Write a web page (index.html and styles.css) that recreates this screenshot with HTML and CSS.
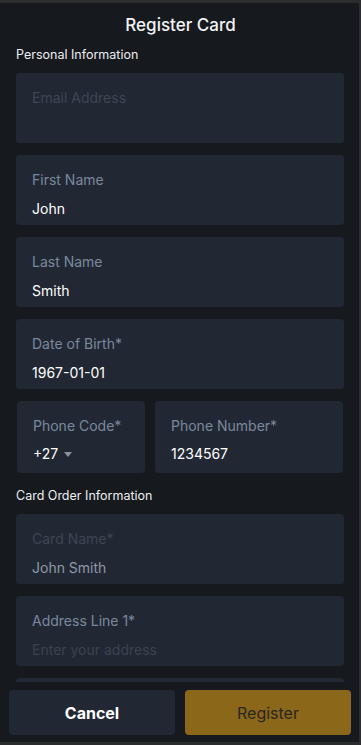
FILE: index.html
```html
<!DOCTYPE html>
<html>
<head>
<meta charset="utf-8">
<link rel="stylesheet" href="styles.css">
</head>
<body>
<div class="app">
  <div class="scroll">
    <h1 class="title">Register Card</h1>
    <h2 class="section">Personal Information</h2>
    <div class="field"><div class="placeholder">Email Address</div></div>
    <div class="field"><div class="label">First Name</div><div class="value">John</div></div>
    <div class="field"><div class="label">Last Name</div><div class="value">Smith</div></div>
    <div class="field"><div class="label">Date of Birth*</div><div class="value">1967-01-01</div></div>
    <div class="phone-row">
      <div class="field tall"><div class="label">Phone Code*</div><div class="value">+27 <span class="caret"></span></div></div>
      <div class="field tall"><div class="label">Phone Number*</div><div class="value">1234567</div></div>
    </div>
    <h2 class="section second">Card Order Information</h2>
    <div class="field"><div class="label dim">Card Name*</div><div class="value muted">John Smith</div></div>
    <div class="field"><div class="label">Address Line 1*</div><div class="value placeholder-v">Enter your address</div></div>
    <div class="field"></div>
  </div>
  <div class="footer">
    <button class="btn cancel">Cancel</button>
    <button class="btn register">Register</button>
  </div>
</div>
</body>
</html>
```
FILE: styles.css
```css
* { box-sizing: border-box; }
html, body { margin: 0; padding: 0; }
body {
  background: #2b2c2e;
  font-family: Inter, "Noto Sans", sans-serif;
  width: 361px;
  height: 745px;
  overflow: hidden;
}
.app {
  margin-top: 3px;
  width: 359px;
  height: 739px;
  background: #16191e;
  display: flex;
  flex-direction: column;
}
.scroll {
  flex: 1;
  overflow: hidden;
  padding: 0 15px 0 16px;
  display: flex;
  flex-direction: column;
  gap: 12px;
}
.title {
  margin: 12px 0 0;
  font-size: 17px;
  line-height: 20px;
  font-weight: 500;
  color: #f2f3f5;
  text-align: center;
  padding-left: 1px;
}
.section {
  margin: 0 0 -2px;
  font-size: 12.5px;
  line-height: 16px;
  font-weight: 400;
  color: #eceef1;
}
.section.second { margin-top: 3px; }
.field {
  flex: none;
  height: 70px;
  background: #222833;
  border-radius: 4px;
  padding: 16px 16px 0;
}
.field.tall { height: 72px; }
.label, .placeholder, .value {
  font-size: 14px;
  line-height: 18px;
}
.label { color: #7a889e; }
.label.dim { color: #3c4655; }
.placeholder { color: #3c4655; }
.value {
  margin-top: 11px;
  color: #ffffff;
  display: flex;
  align-items: center;
  gap: 6px;
}
.tall .value { margin-top: 10px; }
.value.muted { color: #8e98a6; }
.value.placeholder-v { color: #3a4350; }
.caret {
  width: 0; height: 0;
  border-left: 4.5px solid transparent;
  border-right: 4.5px solid transparent;
  border-top: 5px solid #8a93a0;
  margin-top: 1px;
}
.phone-row {
  display: grid;
  grid-template-columns: 128px 1fr;
  gap: 10px;
  padding: 0 1px;
  flex: none;
}
.footer {
  flex: none;
  height: 60px;
  padding: 8px 8px 7px 9px;
  display: flex;
  gap: 10px;
  background: #16191e;
}
.btn {
  flex: 1;
  border: none;
  border-radius: 4px;
  font-family: Inter, "Noto Sans", sans-serif;
  font-size: 16px;
  line-height: 20px;
  height: 45px;
  padding: 0;
}
.cancel { background: #222833; color: #ffffff; font-weight: 700; }
.register { background: #8b6719; color: #2a2620; font-weight: 400; }
```
